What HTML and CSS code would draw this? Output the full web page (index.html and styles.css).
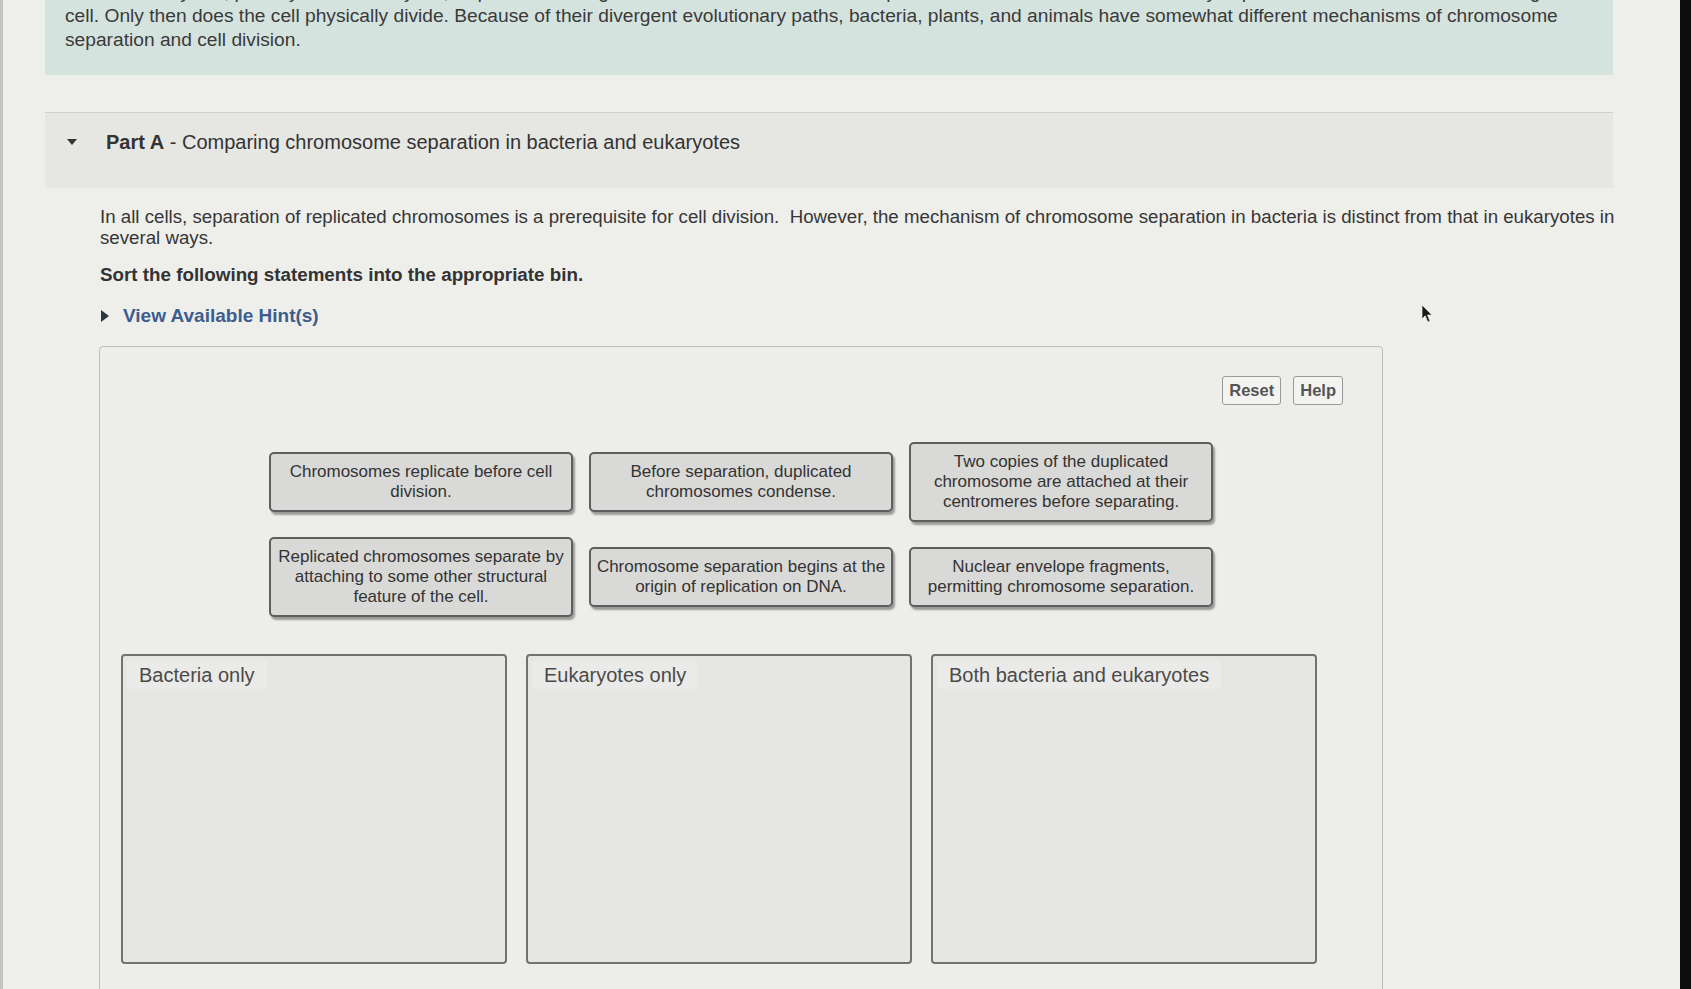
FILE: index.html
```html
<!DOCTYPE html>
<html lang="en">
<head>
<meta charset="utf-8">
<title>Part A - Comparing chromosome separation</title>
<link rel="stylesheet" href="styles.css">
</head>
<body>
<div class="screen">
  <div class="edge-left"></div>
  <main class="page">
    <section class="intro">
      <p>Division of any cell, prokaryotic or eukaryotic, requires that the genetic information in each of the parent cell's chromosomes be faithfully copied and distributed into each daughter cell. Only then does the cell physically divide. Because of their divergent evolutionary paths, bacteria, plants, and animals have somewhat different mechanisms of chromosome separation and cell division.</p>
    </section>

    <section class="part">
      <header class="part-head">
        <span class="caret-down"></span>
        <h2 class="part-title"><span class="part-label">Part A</span> - Comparing chromosome separation in bacteria and eukaryotes</h2>
      </header>

      <div class="part-body">
        <p class="prompt">In all cells, separation of replicated chromosomes is a prerequisite for cell division.&nbsp; However, the mechanism of chromosome separation in bacteria is distinct from that in eukaryotes in several ways.</p>
        <p class="instr">Sort the following statements into the appropriate bin.</p>
        <div class="hints"><span class="caret-right"></span><span class="hints-text">View Available Hint(s)</span></div>

        <div class="panel">
          <div class="toolbar">
            <button class="tool-btn">Reset</button>
            <button class="tool-btn">Help</button>
          </div>

          <div class="cards">
            <div class="card">Chromosomes replicate before cell division.</div>
            <div class="card">Before separation, duplicated chromosomes condense.</div>
            <div class="card">Two copies of the duplicated chromosome are attached at their centromeres before separating.</div>
            <div class="card">Replicated chromosomes separate by attaching to some other structural feature of the cell.</div>
            <div class="card">Chromosome separation begins at the origin of replication on DNA.</div>
            <div class="card">Nuclear envelope fragments, permitting chromosome separation.</div>
          </div>

          <div class="bins">
            <div class="bin"><div class="bin-title">Bacteria only</div></div>
            <div class="bin"><div class="bin-title">Eukaryotes only</div></div>
            <div class="bin"><div class="bin-title">Both bacteria and eukaryotes</div></div>
          </div>
        </div>
      </div>
    </section>
  </main>
  <div class="bezel"></div>
  <svg class="cursor" width="12" height="20" viewBox="0 0 12 20" aria-hidden="true">
    <path d="M1 1 L1 15 L4.2 11.8 L6.8 18 L9 17 L6.5 11 L11 11 Z" fill="#1a1a1a" stroke="#eeeeee" stroke-width="0.7"/>
  </svg>
</div>
</body>
</html>
```

FILE: styles.css
```css
* { box-sizing: border-box; }

html, body {
  margin: 0;
  padding: 0;
  background: #eeeeeb;
  font-family: "Liberation Sans", Arial, sans-serif;
  color: #363636;
  overflow: hidden;
}

.screen {
  position: relative;
  display: flex;
  width: 1691px;
  height: 989px;
  overflow: hidden;
}

.edge-left {
  width: 3px;
  flex: none;
  background: #c4c4c2;
}

.page {
  flex: 1;
  padding: 0 67px 0 42px;
}

.bezel {
  width: 11px;
  flex: none;
  background: #0c0c0c;
}

/* intro */
.intro {
  display: flow-root;
  background: #d5e3df;
  height: 75px;
}

.intro p {
  margin: -20px 0 0;
  padding: 0 15px 0 20px;
  font-size: 19.2px;
  line-height: 24px;
  color: #3a3a3a;
}

/* part */
.part {
  margin-top: 37px;
}

.part-head {
  display: flex;
  align-items: center;
  height: 76px;
  padding: 0 0 17px 22px;
  border-top: 1px solid #cfcfcc;
  background: #e6e6e3;
}

.caret-down {
  width: 0;
  height: 0;
  border-left: 5px solid transparent;
  border-right: 5px solid transparent;
  border-top: 6px solid #333;
  margin-right: 29px;
}

.part-title {
  margin: 0;
  font-size: 20px;
  font-weight: normal;
  color: #333;
}

.part-label {
  font-weight: bold;
}

.part-body {
  padding: 18px 0 40px 55px;
}

.prompt {
  margin: 0 -25px 0 0;
  font-size: 18.7px;
  line-height: 21px;
}

.instr {
  margin: 16px 0 0;
  font-size: 18.8px;
  line-height: 21px;
  font-weight: bold;
  color: #333;
}

.hints {
  display: flex;
  align-items: center;
  margin-top: 20px;
  height: 21px;
}

.caret-right {
  width: 0;
  height: 0;
  border-top: 6px solid transparent;
  border-bottom: 6px solid transparent;
  border-left: 8px solid #2c3440;
  margin-left: 1px;
  margin-right: 14px;
}

.hints-text {
  font-size: 19px;
  font-weight: bold;
  color: #3c5d8e;
}

/* panel */
.panel {
  margin-top: 20px;
  margin-left: -1px;
  width: 1284px;
  border: 1px solid #bdbdba;
  border-radius: 4px;
  background: #ededea;
  padding: 29px 39px 60px 21px;
}

.toolbar {
  display: flex;
  justify-content: flex-end;
  gap: 12px;
}

.tool-btn {
  font-family: "Liberation Sans", Arial, sans-serif;
  font-size: 16.5px;
  font-weight: bold;
  color: #555;
  background: #f3f3f1;
  border: 1px solid #9a9a98;
  border-radius: 3px;
  height: 29px;
  padding: 0 6px;
}

.cards {
  margin-top: 37px;
  display: grid;
  grid-template-columns: repeat(3, 304px);
  column-gap: 16px;
  row-gap: 15px;
  justify-content: center;
  align-items: center;
  padding-left: 18px;
}

.card {
  background: #d9d9d7;
  border: 2px solid #5e5e5e;
  border-radius: 5px;
  box-shadow: 2px 3px 2px rgba(0, 0, 0, 0.35);
  padding: 8px 4px;
  font-size: 17px;
  line-height: 20px;
  text-align: center;
  color: #333;
}

.bins {
  margin-top: 37px;
  display: flex;
  gap: 19px;
}

.bin {
  width: 386px;
  height: 310px;
  border: 2px solid #727272;
  border-radius: 4px;
  background: #e6e6e4;
}

.bin-title {
  display: inline-block;
  margin: 5px 0 0 4px;
  padding: 2px 12px;
  font-size: 20px;
  line-height: 24px;
  color: #4a4a4a;
  background: #eaeae8;
}

.cursor {
  position: absolute;
  left: 1421px;
  top: 304px;
}
```
